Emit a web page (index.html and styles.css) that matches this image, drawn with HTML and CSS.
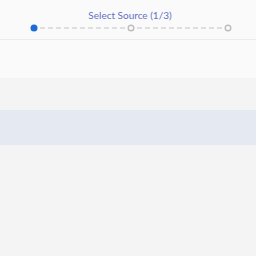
FILE: index.html
```html
<!DOCTYPE html>
<html>
<head>
<meta charset="utf-8">
<link rel="stylesheet" href="styles.css">
</head>
<body>
<header class="header">
  <div class="title">Select Source (1/3)</div>
  <svg class="stepper" width="206" height="10" viewBox="0 0 206 10">
    <line x1="12" y1="5" x2="97" y2="5" stroke="#c4c4c4" stroke-width="1" stroke-dasharray="5 3"/>
    <line x1="109" y1="5" x2="194" y2="5" stroke="#c4c4c4" stroke-width="1" stroke-dasharray="5 3"/>
    <circle cx="6" cy="5" r="3.5" fill="#1e6bd6"/>
    <circle cx="103" cy="5" r="2.8" fill="none" stroke="#bdbdbd" stroke-width="1.4"/>
    <circle cx="200" cy="5" r="2.8" fill="none" stroke="#bdbdbd" stroke-width="1.4"/>
  </svg>
</header>
<section class="panel-a"></section>
<section class="panel-b"></section>
<section class="panel-c"></section>
</body>
</html>
```
FILE: styles.css
```css
html, body {
  margin: 0;
  padding: 0;
  background: #f4f4f4;
}
.header {
  height: 39px;
  border-bottom: 1px solid #ebebeb;
  background: #fafafa;
  display: flex;
  flex-direction: column;
  align-items: center;
  box-sizing: content-box;
}
.title {
  font-family: Lato, "Open Sans", sans-serif;
  font-size: 10px;
  line-height: 14px;
  color: #6470c6;
  margin-top: 8px;
  margin-left: 4px;
}
.stepper {
  display: block;
  margin-top: 1px;
  margin-left: 6px;
}
.panel-a {
  height: 38px;
  background: #fafafa;
}
.panel-b {
  height: 32px;
  background: #f4f4f4;
}
.panel-c {
  height: 35px;
  background: #e5e9f1;
}
```
